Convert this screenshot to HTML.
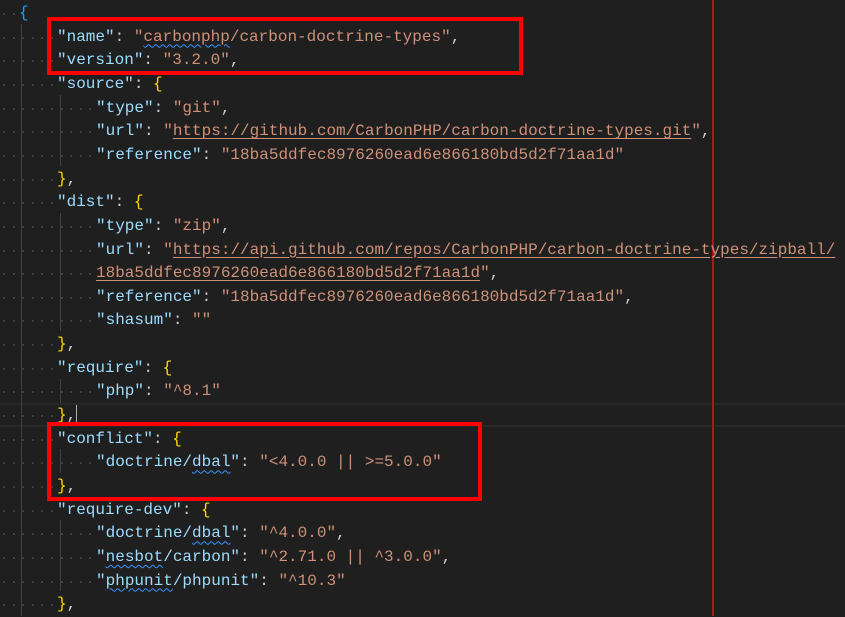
<!DOCTYPE html>
<html><head><meta charset="utf-8"><style>
html,body{margin:0;padding:0;}
body{width:845px;height:616px;overflow:hidden;background:#1f1f1f;position:relative;font-family:"Liberation Mono",monospace;font-size:16px;}
.l{position:absolute;height:23.65px;line-height:23.65px;white-space:pre;color:#cccccc;margin-top:2px}
.k{color:#9cdcfe}.s{color:#ce9178}.b1{color:#179fff}.b2{color:#ffd700}
.u{text-decoration:underline;text-decoration-color:#ce9178;text-underline-offset:3px}
.w{text-decoration:underline wavy #3794ff;text-underline-offset:3px;text-decoration-thickness:1px}
.g{position:absolute;width:1px;background:#404040}
.d{position:absolute;width:2px;height:2px;background:#4a4a4a;border-radius:1px}
.box{position:absolute;border:4px solid #ff0000;box-sizing:border-box}
</style></head><body>
<div style="position:absolute;left:0;top:403px;width:845px;height:24px;border-top:2px solid #282828;border-bottom:2px solid #282828;box-sizing:border-box"></div>
<div style="position:absolute;left:712px;top:0;width:2px;height:616px;background:#b01818"></div>
<div class="g" style="left:21px;top:24px;height:592px"></div>
<div class="g" style="left:60px;top:95px;height:71px"></div>
<div class="g" style="left:60px;top:213px;height:118px"></div>
<div class="g" style="left:60px;top:379px;height:24px"></div>
<div class="g" style="left:60px;top:449px;height:24px"></div>
<div class="g" style="left:60px;top:520px;height:71px"></div>
<div id="dots"></div>
<script>
var lines=[0,2,2,2,3,3,3,2,2,3,3,0,3,3,2,2,3,2,2,3,2,2,3,3,3,2];
var h='';
for(var i=0;i<lines.length;i++){var y=i*23.65+13;var n=lines[i]==0?2:(lines[i]==2?6:10);
 if(i==0)n=2; if(i==11)n=10;
 for(var j=0;j<n;j++){h+='<div class="d" style="left:'+(3+j*9.6)+'px;top:'+y+'px"></div>';}}
document.getElementById('dots').innerHTML=h;
</script>
<div class="l" style="left:19px;top:0px"><span class="b1">{</span></div>
<div class="l" style="left:57px;top:23.65px"><span class="k">"name"</span>: <span class="s">"<span class="w">carbonphp</span>/carbon-doctrine-types"</span>,</div>
<div class="l" style="left:57px;top:47.3px"><span class="k">"version"</span>: <span class="s">"3.2.0"</span>,</div>
<div class="l" style="left:57px;top:70.95px"><span class="k">"source"</span>: <span class="b2">{</span></div>
<div class="l" style="left:96px;top:94.6px"><span class="k">"type"</span>: <span class="s">"git"</span>,</div>
<div class="l" style="left:96px;top:118.25px"><span class="k">"url"</span>: <span class="s">"<span class="u">https://github.com/CarbonPHP/carbon-doctrine-types.git</span>"</span>,</div>
<div class="l" style="left:96px;top:141.9px"><span class="k">"reference"</span>: <span class="s">"18ba5ddfec8976260ead6e866180bd5d2f71aa1d"</span></div>
<div class="l" style="left:57px;top:165.55px"><span class="b2">}</span>,</div>
<div class="l" style="left:57px;top:189.2px"><span class="k">"dist"</span>: <span class="b2">{</span></div>
<div class="l" style="left:96px;top:212.85px"><span class="k">"type"</span>: <span class="s">"zip"</span>,</div>
<div class="l" style="left:96px;top:236.5px"><span class="k">"url"</span>: <span class="s">"<span class="u">https://api.github.com/repos/CarbonPHP/carbon-doctrine-types/zipball/</span></span></div>
<div class="l" style="left:96px;top:260.15px"><span class="s"><span class="u">18ba5ddfec8976260ead6e866180bd5d2f71aa1d</span>"</span>,</div>
<div class="l" style="left:96px;top:283.8px"><span class="k">"reference"</span>: <span class="s">"18ba5ddfec8976260ead6e866180bd5d2f71aa1d"</span>,</div>
<div class="l" style="left:96px;top:307.45px"><span class="k">"shasum"</span>: <span class="s">""</span></div>
<div class="l" style="left:57px;top:331.1px"><span class="b2">}</span>,</div>
<div class="l" style="left:57px;top:354.75px"><span class="k">"require"</span>: <span class="b2">{</span></div>
<div class="l" style="left:96px;top:378.4px"><span class="k">"php"</span>: <span class="s">"^8.1"</span></div>
<div class="l" style="left:57px;top:402.05px"><span class="b2">}</span>,<span style="display:inline-block;width:1px;height:17px;background:#aeafad;vertical-align:-3px"></span></div>
<div class="l" style="left:57px;top:425.7px"><span class="k">"conflict"</span>: <span class="b2">{</span></div>
<div class="l" style="left:96px;top:449.35px"><span class="k">"doctrine/<span class="w">dbal</span>"</span>: <span class="s">"&lt;4.0.0 || &gt;=5.0.0"</span></div>
<div class="l" style="left:57px;top:473px"><span class="b2">}</span>,</div>
<div class="l" style="left:57px;top:496.65px"><span class="k">"require-dev"</span>: <span class="b2">{</span></div>
<div class="l" style="left:96px;top:520.3px"><span class="k">"doctrine/<span class="w">dbal</span>"</span>: <span class="s">"^4.0.0"</span>,</div>
<div class="l" style="left:96px;top:543.95px"><span class="k">"<span class="w">nesbot</span>/carbon"</span>: <span class="s">"^2.71.0 || ^3.0.0"</span>,</div>
<div class="l" style="left:96px;top:567.6px"><span class="k">"<span class="w">phpunit</span>/phpunit"</span>: <span class="s">"^10.3"</span></div>
<div class="l" style="left:57px;top:591.25px"><span class="b2">}</span>,</div>
<div class="box" style="left:47px;top:17px;width:476px;height:58px"></div>
<div class="box" style="left:47px;top:422px;width:435px;height:79px"></div>
</body></html>
